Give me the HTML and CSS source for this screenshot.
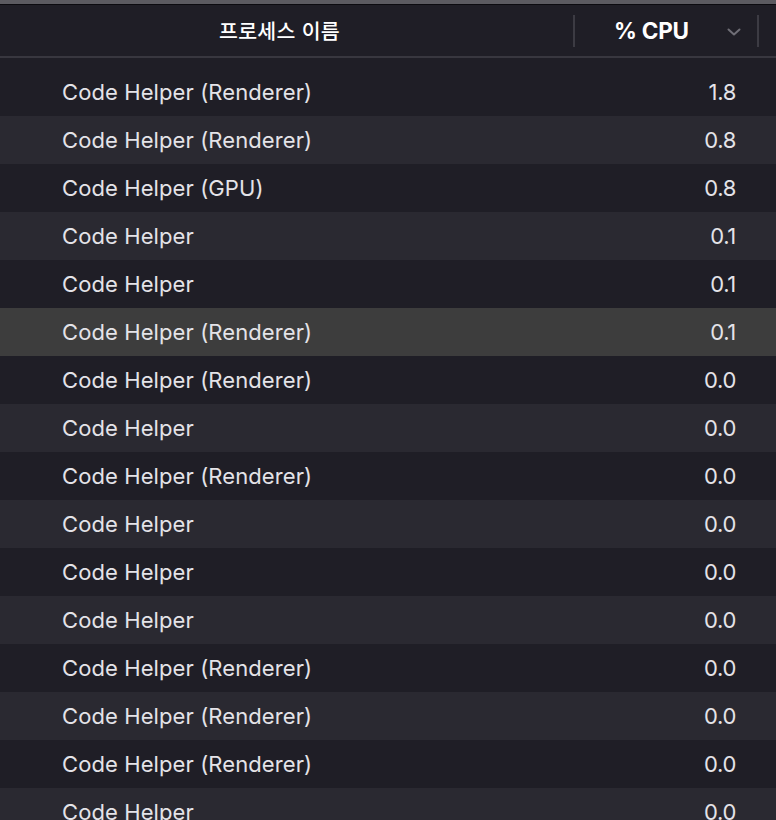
FILE: index.html
```html
<!DOCTYPE html>
<html lang="ko">
<head>
<meta charset="utf-8">
<link rel="stylesheet" href="styles.css">
</head>
<body>
<div class="window">
  <div class="topbar"></div>
  <div class="header">
    <div class="col-name"><span class="hname">프로세스 이름</span></div>
    <div class="sep"></div>
    <div class="col-cpu">
      <span class="hcpu">% CPU</span>
      <svg class="chev" width="14" height="8" viewBox="0 0 14 8"><path d="M1.5 1.5 L7 6.5 L12.5 1.5" fill="none" stroke="#6f6e76" stroke-width="2" stroke-linecap="round" stroke-linejoin="round"/></svg>
    </div>
    <div class="sep"></div>
  </div>
  <div class="rows">
    <div class="row"><span class="name">Code Helper (Renderer)</span><span class="val">1.8</span></div>
    <div class="row alt"><span class="name">Code Helper (Renderer)</span><span class="val">0.8</span></div>
    <div class="row"><span class="name">Code Helper (GPU)</span><span class="val">0.8</span></div>
    <div class="row alt"><span class="name">Code Helper</span><span class="val">0.1</span></div>
    <div class="row"><span class="name">Code Helper</span><span class="val">0.1</span></div>
    <div class="row sel"><span class="name">Code Helper (Renderer)</span><span class="val">0.1</span></div>
    <div class="row"><span class="name">Code Helper (Renderer)</span><span class="val">0.0</span></div>
    <div class="row alt"><span class="name">Code Helper</span><span class="val">0.0</span></div>
    <div class="row"><span class="name">Code Helper (Renderer)</span><span class="val">0.0</span></div>
    <div class="row alt"><span class="name">Code Helper</span><span class="val">0.0</span></div>
    <div class="row"><span class="name">Code Helper</span><span class="val">0.0</span></div>
    <div class="row alt"><span class="name">Code Helper</span><span class="val">0.0</span></div>
    <div class="row"><span class="name">Code Helper (Renderer)</span><span class="val">0.0</span></div>
    <div class="row alt"><span class="name">Code Helper (Renderer)</span><span class="val">0.0</span></div>
    <div class="row"><span class="name">Code Helper (Renderer)</span><span class="val">0.0</span></div>
    <div class="row alt"><span class="name">Code Helper</span><span class="val">0.0</span></div>
  </div>
</div>
</body>
</html>
```

FILE: styles.css
```css
html, body {
  margin: 0;
  padding: 0;
  background: #1f1e26;
  overflow: hidden;
}
.window {
  width: 776px;
  height: 820px;
  overflow: hidden;
  background: #1f1e26;
  font-family: Inter, "Noto Sans CJK KR", sans-serif;
}
.topbar {
  height: 4px;
  background: #5c5b61;
  border-bottom: 1px solid #0c0b10;
}
.header {
  height: 51px;
  display: flex;
  align-items: center;
  border-bottom: 2px solid #38373f;
  color: #ffffff;
  font-weight: 600;
  font-size: 20px;
}
.col-name {
  width: 573px;
  display: flex;
  justify-content: center;
  padding-right: 14px;
  box-sizing: border-box;
}
.hname {
  font-family: "Noto Sans CJK KR", sans-serif;
  font-weight: 500;
  font-size: 20.5px;
  letter-spacing: 0.3px;
  margin-top: -2px;
}
.sep {
  width: 2px;
  height: 32px;
  background: #3c3b43;
}
.col-cpu {
  width: 182px;
  display: flex;
  align-items: center;
  box-sizing: border-box;
  padding-left: 39px;
}
.hcpu {
  font-weight: 700;
  font-size: 22.5px;
  letter-spacing: -0.2px;
}
.chev {
  margin-left: 38px;
  margin-top: 2px;
}
.rows {
  padding-top: 10px;
}
.row {
  height: 48px;
  display: flex;
  align-items: center;
  justify-content: space-between;
  padding: 0 40px 0 62px;
  color: #e4e3e8;
  font-size: 22px;
  letter-spacing: 0.1px;
}
.row.alt {
  background: #2a2931;
}
.row.sel {
  background: #3d3d3d;
}
.val {
  letter-spacing: -0.3px;
}
```
